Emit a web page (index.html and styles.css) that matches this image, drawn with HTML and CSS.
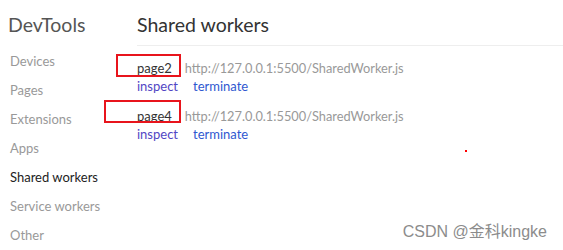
FILE: index.html
```html
<!DOCTYPE html>
<html>
<head>
<meta charset="utf-8">
<link rel="stylesheet" href="styles.css">
</head>
<body>
<div class="page">
  <nav class="sidebar">
    <h1 class="title">DevTools</h1>
    <ul class="menu">
      <li class="item">Devices</li>
      <li class="item">Pages</li>
      <li class="item">Extensions</li>
      <li class="item">Apps</li>
      <li class="item selected">Shared workers</li>
      <li class="item">Service workers</li>
      <li class="item">Other</li>
    </ul>
  </nav>
  <main class="content">
    <h2 class="header">Shared workers</h2>
    <div class="row">
      <div class="mark mark-a"></div>
      <div class="line">
        <span class="name">page2</span>
        <span class="url">http://127.0.0.1:5500/SharedWorker.js</span>
      </div>
      <div class="actions">
        <a class="link visited">inspect</a>
        <a class="link">terminate</a>
      </div>
    </div>
    <div class="row">
      <div class="mark mark-b"></div>
      <div class="line">
        <span class="name">page4</span>
        <span class="url">http://127.0.0.1:5500/SharedWorker.js</span>
      </div>
      <div class="actions">
        <a class="link visited">inspect</a>
        <a class="link">terminate</a>
      </div>
    </div>
  </main>
</div>
<div class="dot"></div>
<div class="watermark">CSDN @金科kingke</div>
</body>
</html>
```
FILE: styles.css
```css
html, body {
  margin: 0;
  padding: 0;
  background: #fff;
}
body {
  font-family: Lato, "Open Sans", sans-serif;
  font-size: 13px;
  width: 563px;
  height: 250px;
  overflow: hidden;
  position: relative;
}
.page {
  display: flex;
}
.sidebar {
  width: 137px;
  flex: none;
}
.title {
  margin: 0;
  padding: 10.5px 0 0 8px;
  font-size: 19.5px;
  line-height: 28px;
  font-weight: 400;
  color: #555;
}
.menu {
  list-style: none;
  margin: 8.5px 0 0 0;
  padding: 0 0 0 10px;
}
.item {
  line-height: 29px;
  height: 29px;
  color: #999;
  white-space: nowrap;
}
.item.selected {
  color: #222;
}
.content {
  flex: 1;
}
.header {
  margin: 0;
  padding: 10.5px 0 6.5px 0;
  font-size: 19.5px;
  line-height: 28px;
  font-weight: 400;
  color: #333;
  border-bottom: 1px solid #eeeeee;
}
.row {
  position: relative;
  margin-top: 12.5px;
  line-height: 18px;
}
.row + .row {
  margin-top: 12px;
}
.line {
  display: flex;
  align-items: baseline;
  gap: 13px;
  white-space: nowrap;
}
.name {
  color: #333;
}
.url {
  color: #999;
  font-size: 12.8px;
}
.actions {
  display: flex;
  gap: 15px;
}
.link {
  color: #2f58d0;
  cursor: pointer;
}
.link.visited {
  color: #5246c4;
}
.mark {
  position: absolute;
  border: 2px solid #e8141c;
  box-sizing: border-box;
  height: 23px;
}
.mark-a {
  top: -4.5px;
  left: -21px;
  width: 65px;
}
.mark-b {
  top: -6.5px;
  left: -33px;
  width: 77px;
}
.dot {
  position: absolute;
  left: 465px;
  top: 150px;
  width: 2px;
  height: 2px;
  background: #f00;
}
.watermark {
  position: absolute;
  right: 16px;
  top: 221px;
  font-family: "Liberation Sans", "Noto Sans CJK SC", sans-serif;
  font-size: 16px;
  line-height: 22px;
  color: #8c8c8c;
  text-shadow: 0 0 1px #fff;
  white-space: nowrap;
}
```
